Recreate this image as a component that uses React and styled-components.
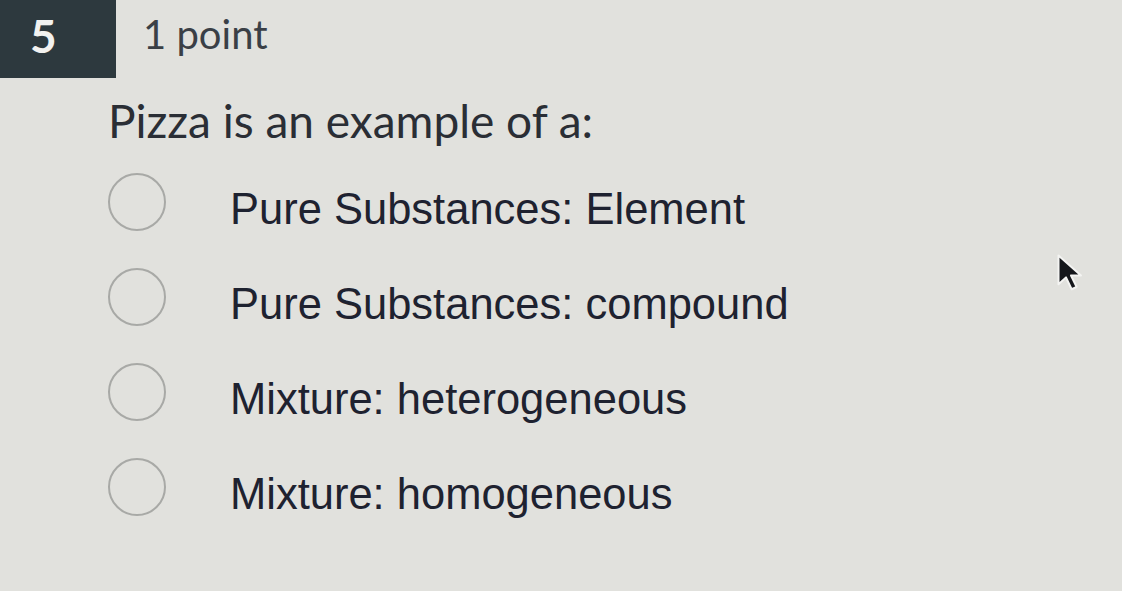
import React from 'react';
import styled, { createGlobalStyle } from 'styled-components';

const GlobalStyle = createGlobalStyle`
	html, body {
		margin: 0;
		padding: 0;
		background: #e1e1dd;
	}
	body {
		width: 1122px;
		height: 591px;
		overflow: hidden;
	}
`;

const options = [
	'Pure Substances: Element',
	'Pure Substances: compound',
	'Mixture: heterogeneous',
	'Mixture: homogeneous',
];

const App = () => {
	return (
		<Page>
			<GlobalStyle />
			<Header>
				<Badge>5</Badge>
				<Points>1 point</Points>
			</Header>
			<Body>
				<Question>Pizza is an example of a:</Question>
				<OptionList>
					{options.map((label) => (
						<Option key={label}>
							<Radio />
							<OptionText>{label}</OptionText>
						</Option>
					))}
				</OptionList>
			</Body>
			<Cursor viewBox='0 0 24 32'>
				<path
					d='M2 2 L2 25 L8 19.5 L12.5 29 L16.5 27.2 L12 18 L20 18 Z'
					fill='#15171b'
					stroke='#f4f4f2'
					strokeWidth='1.6'
					strokeLinejoin='round'
				/>
			</Cursor>
		</Page>
	);
};

const Page = styled.main`
	position: relative;
	width: 1122px;
	height: 591px;
	background: #e1e1dd;
	font-family: Lato, 'Liberation Sans', sans-serif;
`;

const Header = styled.header`
	display: flex;
	align-items: flex-start;
`;

const Badge = styled.div`
	width: 116px;
	height: 78px;
	background: #2d393e;
	color: #f2f2f0;
	font-size: 46px;
	font-weight: 700;
	display: flex;
	align-items: center;
	padding-left: 30px;
	padding-bottom: 8px;
	box-sizing: border-box;
`;

const Points = styled.div`
	margin-left: 27px;
	margin-top: 14px;
	font-size: 40px;
	color: #3a3f46;
	line-height: 1;
`;

const Body = styled.section`
	padding-left: 108px;
	padding-top: 18px;
`;

const Question = styled.h2`
	margin: 0;
	font-size: 46px;
	font-weight: 400;
	color: #2a2e35;
	line-height: 1.1;
`;

const OptionList = styled.ul`
	list-style: none;
	margin: 0;
	padding: 26px 0 0;
	display: flex;
	flex-direction: column;
	gap: 37px;
`;

const Option = styled.li`
	display: flex;
	align-items: center;
	height: 58px;
`;

const Radio = styled.span`
	width: 58px;
	height: 58px;
	border: 2.5px solid #a8a9a6;
	border-radius: 50%;
	box-sizing: border-box;
	flex-shrink: 0;
`;

const OptionText = styled.span`
	margin-left: 64px;
	font-family: 'Liberation Sans', Arial, sans-serif;
	font-size: 43.5px;
	color: #1e2230;
	padding-top: 16px;
`;

const Cursor = styled.svg`
	position: absolute;
	left: 1056px;
	top: 251px;
	width: 30px;
	height: 44px;
`;

export default App;
